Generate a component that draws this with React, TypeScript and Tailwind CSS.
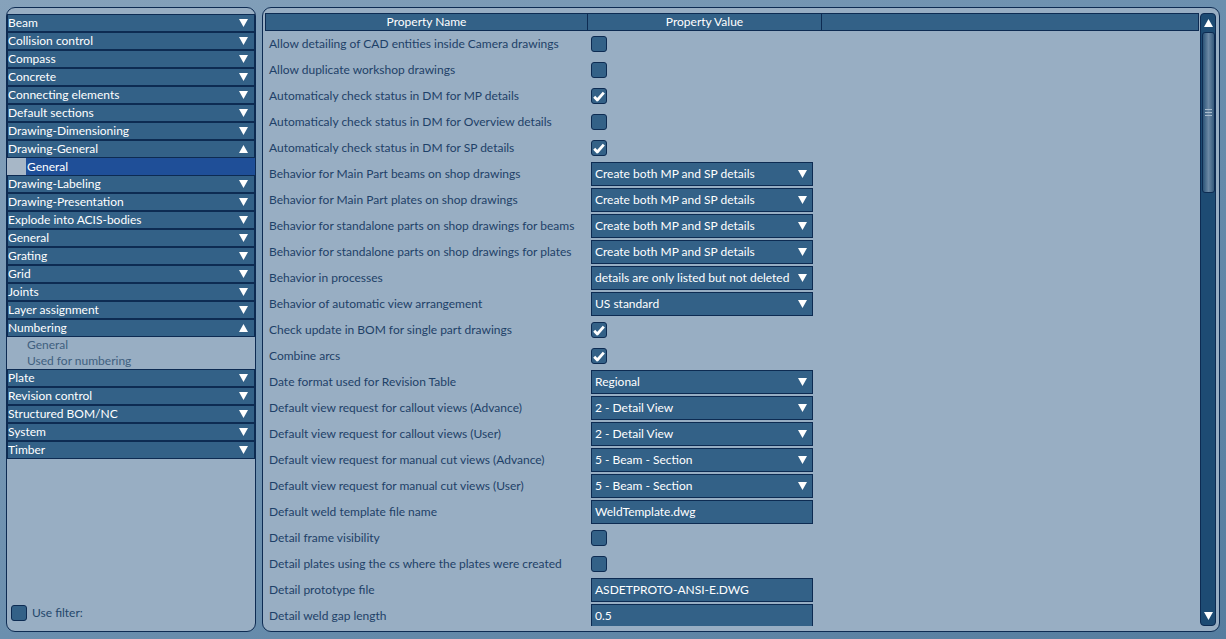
import React from 'react';

const font = { fontFamily: '"Segoe UI", Lato, "Noto Sans", sans-serif' };

type Group = { name: string; open?: boolean; subs?: string[]; selected?: string };

const groups: Group[] = [
  { name: 'Beam' },
  { name: 'Collision control' },
  { name: 'Compass' },
  { name: 'Concrete' },
  { name: 'Connecting elements' },
  { name: 'Default sections' },
  { name: 'Drawing-Dimensioning' },
  { name: 'Drawing-General', open: true, subs: ['General'], selected: 'General' },
  { name: 'Drawing-Labeling' },
  { name: 'Drawing-Presentation' },
  { name: 'Explode into ACIS-bodies' },
  { name: 'General' },
  { name: 'Grating' },
  { name: 'Grid' },
  { name: 'Joints' },
  { name: 'Layer assignment' },
  { name: 'Numbering', open: true, subs: ['General', 'Used for numbering'] },
  { name: 'Plate' },
  { name: 'Revision control' },
  { name: 'Structured BOM/NC' },
  { name: 'System' },
  { name: 'Timber' },
];

type Row =
  | { label: string; kind: 'check'; on: boolean }
  | { label: string; kind: 'select'; value: string }
  | { label: string; kind: 'text'; value: string };

const MP = 'Create both MP and SP details';

const rows: Row[] = [
  { label: 'Allow detailing of CAD entities inside Camera drawings', kind: 'check', on: false },
  { label: 'Allow duplicate workshop drawings', kind: 'check', on: false },
  { label: 'Automaticaly check status in DM for MP details', kind: 'check', on: true },
  { label: 'Automaticaly check status in DM for Overview details', kind: 'check', on: false },
  { label: 'Automaticaly check status in DM for SP details', kind: 'check', on: true },
  { label: 'Behavior for Main Part beams on shop drawings', kind: 'select', value: MP },
  { label: 'Behavior for Main Part plates on shop drawings', kind: 'select', value: MP },
  { label: 'Behavior for standalone parts on shop drawings for beams', kind: 'select', value: MP },
  { label: 'Behavior for standalone parts on shop drawings for plates', kind: 'select', value: MP },
  { label: 'Behavior in processes', kind: 'select', value: 'details are only listed but not deleted' },
  { label: 'Behavior of automatic view arrangement', kind: 'select', value: 'US standard' },
  { label: 'Check update in BOM for single part drawings', kind: 'check', on: true },
  { label: 'Combine arcs', kind: 'check', on: true },
  { label: 'Date format used for Revision Table', kind: 'select', value: 'Regional' },
  { label: 'Default view request for callout views (Advance)', kind: 'select', value: '2 - Detail View' },
  { label: 'Default view request for callout views (User)', kind: 'select', value: '2 - Detail View' },
  { label: 'Default view request for manual cut views (Advance)', kind: 'select', value: '5 - Beam - Section' },
  { label: 'Default view request for manual cut views (User)', kind: 'select', value: '5 - Beam - Section' },
  { label: 'Default weld template file name', kind: 'text', value: 'WeldTemplate.dwg' },
  { label: 'Detail frame visibility', kind: 'check', on: false },
  { label: 'Detail plates using the cs where the plates were created', kind: 'check', on: false },
  { label: 'Detail prototype file', kind: 'text', value: 'ASDETPROTO-ANSI-E.DWG' },
  { label: 'Detail weld gap length', kind: 'text', value: '0.5' },
];

const Arrow = ({ up = false, className = '' }: { up?: boolean; className?: string }) => (
  <svg width="9" height="8" viewBox="0 0 9 8" className={className}>
    {up ? <polygon points="4.5,0 9,8 0,8" fill="white" /> : <polygon points="0,0 9,0 4.5,8" fill="white" />}
  </svg>
);

const CheckBox = ({ on }: { on: boolean }) => (
  <div className="w-[16px] h-[16px] rounded-[3px] border border-[#0d2b52] bg-[#336187] flex items-center justify-center">
    {on && (
      <svg width="12" height="11" viewBox="0 0 12 11">
        <path d="M1.2 5.8 L4.3 9 L10.8 1.6" fill="none" stroke="white" strokeWidth="2.8" strokeLinejoin="round" />
      </svg>
    )}
  </div>
);

const Sidebar = () => (
  <div className="w-[250px] shrink-0 rounded-[9px] border border-[#0d2b52] bg-[#98aec3] flex flex-col pt-[6px] pb-[9px]">
    <div className="flex flex-col">
      {groups.map((g, i) => (
        <div key={i}>
          <div className="h-[18px] border border-[#0d2b52] bg-[#336187] flex items-center justify-between text-white text-[12px] pl-[0px] pr-[6px]">
            <span>{g.name}</span>
            <Arrow up={g.open} />
          </div>
          {g.open &&
            g.subs?.map((s) =>
              g.selected === s ? (
                <div key={s} className="h-[17px] flex">
                  <div className="w-[19px] bg-[#a7b7c7]" />
                  <div className="flex-1 bg-[#1f4f98] text-white text-[12px] flex items-center pl-[1px]">{s}</div>
                </div>
              ) : (
                <div key={s} className="h-[16px] flex items-center pl-[20px] text-[12px] text-[#40607f]">
                  {s}
                </div>
              ),
            )}
        </div>
      ))}
    </div>
    <div className="mt-auto flex items-center gap-[5px] pl-[4px]">
      <CheckBox on={false} />
      <span className="text-[12px] text-[#24476b]">Use filter:</span>
    </div>
  </div>
);

const Scrollbar = () => (
  <div className="w-[16px] shrink-0 ml-[1px] rounded-[4px] border border-[#0d2b52] bg-[#1d4b73] flex flex-col items-center">
    <div className="h-[18px] flex items-center justify-center">
      <Arrow up />
    </div>
    <div className="w-[13px] h-[161px] rounded-[3px] border border-[#0d2b52] bg-gradient-to-r from-[#2c5579] via-[#6b88a4] to-[#34597c] flex flex-col items-center justify-center gap-[2px]">
      <div className="w-[7px] h-[1px] bg-[#a9bccd]" />
      <div className="w-[7px] h-[1px] bg-[#a9bccd]" />
      <div className="w-[7px] h-[1px] bg-[#a9bccd]" />
    </div>
    <div className="flex-1" />
    <div className="h-[18px] flex items-center justify-center">
      <Arrow />
    </div>
  </div>
);

const Value = ({ row }: { row: Row }) => {
  if (row.kind === 'check') return <CheckBox on={row.on} />;
  return (
    <div className="w-[222px] h-[24px] border border-[#0d2b52] bg-[#336187] text-white text-[12px] flex items-center justify-between pl-[3px] pr-[5px]">
      <span>{row.value}</span>
      {row.kind === 'select' && <Arrow />}
    </div>
  );
};

const Properties = () => (
  <div className="flex-1 rounded-[9px] border border-[#0d2b52] bg-[#98aec3] flex pt-[5px] pb-[5px] pl-[2px] pr-[3px]">
    <div className="flex-1 flex flex-col overflow-hidden">
      <div className="h-[18px] shrink-0 flex border border-[#0d2b52] bg-[#336187] text-white text-[12px]">
        <div className="w-[322px] flex items-center justify-center border-r border-[#0d2b52]">Property Name</div>
        <div className="w-[234px] flex items-center justify-center border-r border-[#0d2b52]">Property Value</div>
        <div className="flex-1" />
      </div>
      <div className="flex-1 overflow-hidden">
        {rows.map((r, i) => (
          <div key={i} className="h-[26px] flex items-center">
            <div className="w-[323px] pl-[4px] text-[12px] text-[#1e4168] whitespace-nowrap">{r.label}</div>
            <div className="pl-[3px]">
              <Value row={r} />
            </div>
          </div>
        ))}
      </div>
    </div>
    <Scrollbar />
  </div>
);

export default function App() {
  return (
    <div
      className="w-[1226px] h-[639px] flex gap-[6px] px-[6px] pt-[7px] pb-[7px] bg-gradient-to-br from-[#86a2bb] via-[#6b8fae] to-[#557d9f]"
      style={font}
    >
      <Sidebar />
      <Properties />
    </div>
  );
}
